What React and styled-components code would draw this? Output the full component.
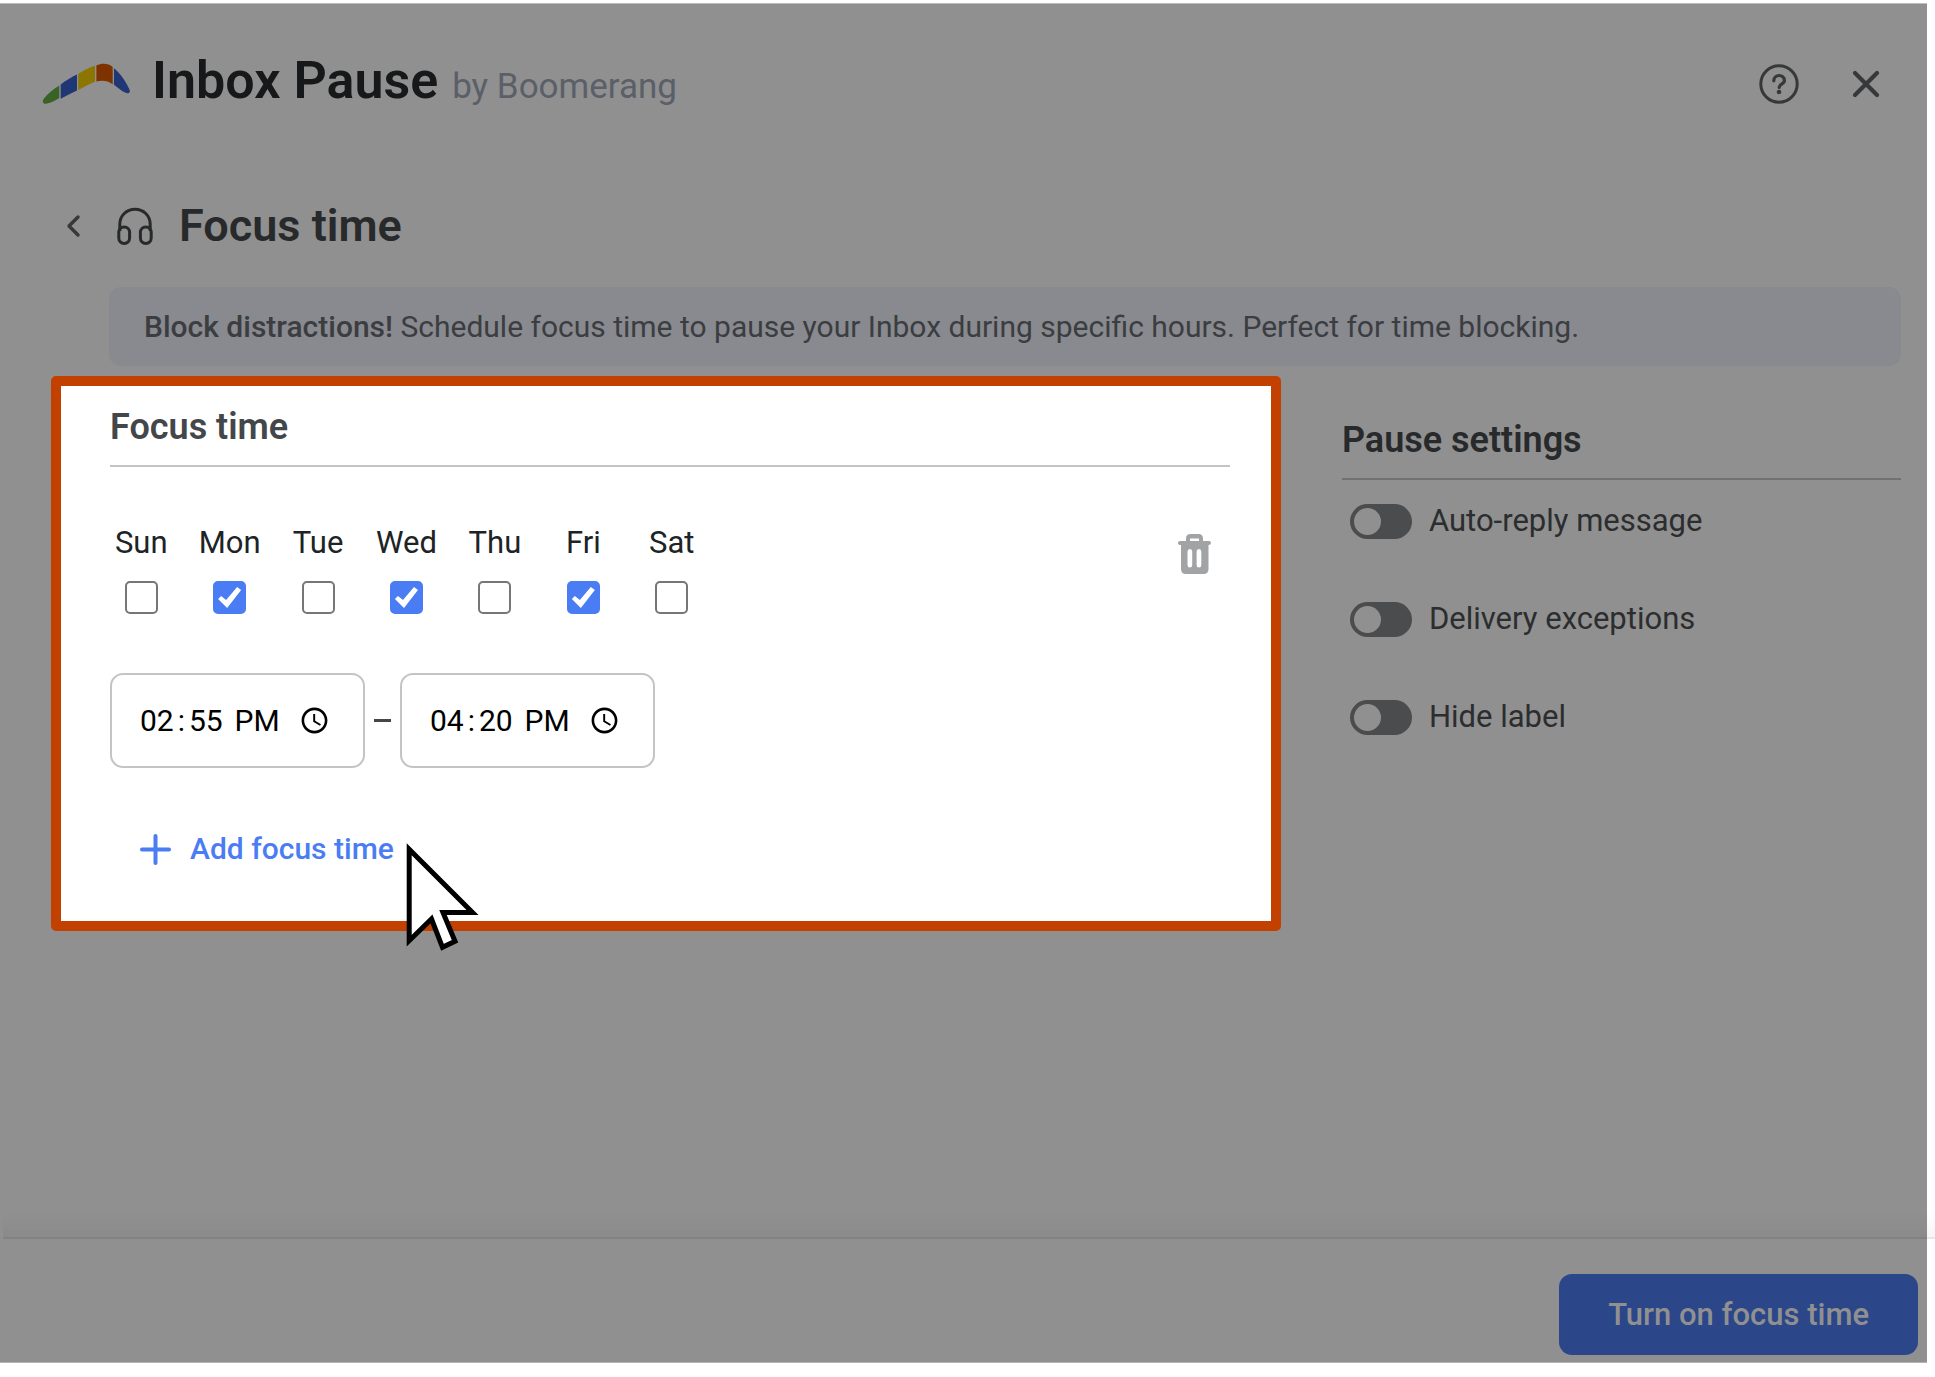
import React, { useState } from 'react';
import styled, { createGlobalStyle } from 'styled-components';

const GlobalStyle = createGlobalStyle`
  * {
    box-sizing: border-box;
  }

  body {
    margin: 0;
    background: #ffffff;
    font-family: Roboto, sans-serif;
    overflow-x: hidden;
  }

  h1, h2, h3, p {
    margin: 0;
  }

  button {
    background: none;
    border: none;
    padding: 0;
    font-family: inherit;
    cursor: pointer;
  }

  svg {
    display: block;
  }
`;

const Dialog = styled.div`
  display: flex;
  flex-direction: column;
  min-height: calc(100vh - 17px);
  margin: 3px 8px 14px 0;
  background: #909090;
  border-top: 1px solid #bcbcbc;
  border-bottom: 1px solid #b4b4b4;
`;

const Header = styled.header`
  display: flex;
  align-items: center;
  justify-content: space-between;
  height: 68px;
  margin-top: 46px;
  padding: 0 43px 0 42px;
`;

const Brand = styled.div`
  display: flex;
  align-items: center;
  gap: 21px;
`;

const Title = styled.h1`
  color: #161819;
  font-size: 52px;
  font-weight: 600;
  line-height: 60px;
`;

const Byline = styled.span`
  margin-left: 14px;
  color: #5b5f68;
  font-size: 35px;
  font-weight: 400;
`;

const HeaderActions = styled.div`
  display: flex;
  align-items: center;
  gap: 49px;
`;

const IconButton = styled.button`
  display: flex;
  color: #363839;
`;

const PageHeading = styled.div`
  display: flex;
  align-items: center;
  margin-top: 82px;
  padding-left: 64px;
`;

const PageTitle = styled.h2`
  margin-left: 26px;
  color: #27292b;
  font-size: 45px;
  font-weight: 600;
  line-height: 52px;
`;

const HeadphonesSlot = styled.span`
  margin-left: 34px;
`;

const Banner = styled.p`
  margin: 35px 26px 0 109px;
  padding: 20px 35px;
  border-radius: 12px;
  background: #888a8f;
  color: #3b3d40;
  font-size: 30px;
  line-height: 39px;

  strong {
    font-weight: 500;
  }
`;

const Columns = styled.main`
  display: grid;
  grid-template-columns: 11fr 5fr;
  align-items: start;
  gap: 61px;
  margin: 10px 26px 0 51px;
`;

const FocusPanel = styled.section`
  position: relative;
  padding: 21px 41px 54px 49px;
  border: 10px solid #c24100;
  border-radius: 5px;
  background: #ffffff;
`;

const SettingsPanel = styled.section`
  padding-top: 44px;
`;

const SectionTitle = styled.h3`
  padding-bottom: 18px;
  border-bottom: 2px solid ${(props) => (props.$dimmed ? '#717171' : '#c4c4c4')};
  color: ${(props) => (props.$dimmed ? '#27292b' : '#444749')};
  font-size: 36px;
  font-weight: 600;
  line-height: 40px;
`;

const ScheduleRow = styled.div`
  display: flex;
  justify-content: space-between;
  margin-top: 58px;
`;

const Days = styled.div`
  display: grid;
  grid-template-columns: repeat(7, 1fr);
  column-gap: 26px;
  width: 593px;
`;

const DayLabel = styled.label`
  display: flex;
  flex-direction: column;
  align-items: center;
  gap: 20px;
  color: #202325;
  font-size: 31px;
  line-height: 36px;
`;

const DayCheckbox = styled.input`
  appearance: none;
  width: 33px;
  height: 33px;
  margin: 0;
  border: 2px solid #767676;
  border-radius: 5px;
  background: #ffffff;

  &:checked {
    border-color: #4a7df3;
    background: #4a7df3;
  }

  &:checked::before {
    content: '';
    display: block;
    width: 29px;
    height: 29px;
    background: #ffffff;
    clip-path: polygon(3px 16px, 6px 13px, 11px 17px, 22px 4px, 26px 7px, 12px 25px);
  }
`;

const DeleteSlot = styled.div`
  padding: 9px 19px 0 0;
`;

const TimeRow = styled.div`
  display: flex;
  align-items: center;
  gap: 9px;
  margin-top: 59px;
`;

const TimeInput = styled.input`
  width: 255px;
  height: 95px;
  padding: 0 33px 0 27px;
  border: 2px solid #c4c4c4;
  border-radius: 13px;
  background: #ffffff;
  color: #000000;
  font-family: inherit;
  font-size: 30px;

  &::-webkit-datetime-edit-text {
    padding: 0 3px;
  }

  &::-webkit-calendar-picker-indicator {
    width: 31px;
    height: 31px;
    margin: 0;
    padding: 0;
    background-size: 31px 31px;
  }
`;

const Dash = styled.span`
  width: 17px;
  height: 3px;
  background: #444749;
`;

const AddButton = styled.button`
  display: flex;
  align-items: center;
  gap: 19px;
  margin: 63px 0 0 30px;
  color: #4a7df3;
  font-size: 30px;
  font-weight: 500;
  line-height: 36px;
`;

const Pointer = styled.svg`
  position: absolute;
  left: 345px;
  top: 454px;
  pointer-events: none;
`;

const SettingList = styled.div`
  display: flex;
  flex-direction: column;
  gap: 62px;
  margin-top: 23px;
  padding-left: 8px;
`;

const SettingLabel = styled.label`
  display: flex;
  align-items: center;
  gap: 17px;
  color: #2b2d2f;
  font-size: 31px;
  line-height: 36px;
`;

const Toggle = styled.input`
  appearance: none;
  display: flex;
  width: 62px;
  height: 35px;
  margin: 0;
  padding: 4px;
  border-radius: 18px;
  background: #4a4c4d;

  &::before {
    content: '';
    width: 27px;
    height: 27px;
    border-radius: 50%;
    background: #909090;
  }

  &:checked {
    justify-content: flex-end;
    background: #2b478a;
  }
`;

const FooterEdge = styled.div`
  height: 26px;
  margin: auto -8px 0 3px;
  border-bottom: 2px solid rgba(0, 0, 0, 0.09);
  background: linear-gradient(rgba(0, 0, 0, 0), rgba(0, 0, 0, 0.04));
`;

const Footer = styled.footer`
  display: flex;
  justify-content: flex-end;
  padding: 35px 9px 7px;
`;

const PrimaryButton = styled.button`
  height: 81px;
  padding: 0 49px;
  border-radius: 13px;
  background: #2b478a;
  color: #909090;
  font-size: 31px;
  font-weight: 500;
`;

const BoomerangLogo = () => (
  <svg width="89" height="42" viewBox="0 0 89 42" aria-hidden="true">
    <path d="M17.3 22.5 V35 C13 37.5 8 40.5 4 40.8 C0.5 41 0 38 2 35.5 C5.5 31 11 26 17.3 22.5 Z" fill="#396325" />
    <path d="M18.7 21.5 C24 17.5 29.5 14 35 11.5 V27.5 C29.5 30 24 33 18.7 35.8 Z" fill="#213775" />
    <path d="M36.3 10.8 C41.5 8 47 4.5 53 2.8 V18.8 C47.5 21 42 24 36.3 27 Z" fill="#8c7500" />
    <path d="M54.4 2.3 C60 -0.2 66.5 0.2 70.7 4 V21.2 C66 17.6 60 17 54.4 18.5 Z" fill="#7d3200" />
    <path d="M72 5.2 C79 11 84 19 87.5 26.5 C88.8 30 86.5 31 83 29.6 C79 28 76 24.5 72 21.8 Z" fill="#213775" />
  </svg>
);

const HelpIcon = () => (
  <svg width="40" height="40" viewBox="0 0 40 40" fill="none" stroke="currentColor" aria-hidden="true">
    <circle cx="20" cy="20" r="18.2" strokeWidth="3" />
    <path d="M14.8 16.8 C14.8 9.8 25.4 9.8 25.4 16.6 C25.4 20.4 20.2 20 20.2 23.4" strokeWidth="3.2" strokeLinecap="round" />
    <circle cx="20" cy="28" r="2.3" fill="currentColor" stroke="none" />
  </svg>
);

const CloseIcon = () => (
  <svg width="36" height="36" viewBox="0 0 36 36" fill="none" stroke="currentColor" aria-hidden="true">
    <path d="M7 7 L29 29 M29 7 L7 29" strokeWidth="4.2" strokeLinecap="round" />
  </svg>
);

const BackIcon = () => (
  <svg width="19" height="28" viewBox="0 0 19 28" fill="none" stroke="currentColor" aria-hidden="true">
    <path d="M14 5 L5 14 L14 23" strokeWidth="3.4" strokeLinecap="round" strokeLinejoin="round" />
  </svg>
);

const HeadphonesIcon = () => (
  <svg width="36" height="38" viewBox="0 0 36 38" fill="none" stroke="#27292b" strokeWidth="3" aria-hidden="true">
    <path d="M2.8 24 V17.5 C2.8 8.5 9.6 2.3 18 2.3 C26.4 2.3 33.2 8.5 33.2 17.5 V24" />
    <rect x="1.8" y="20" width="10.8" height="16.4" rx="5.3" />
    <rect x="23.4" y="20" width="10.8" height="16.4" rx="5.3" />
  </svg>
);

const TrashIcon = () => (
  <svg width="33" height="40" viewBox="0 0 33 40" aria-hidden="true">
    <path
      fillRule="evenodd"
      fill="#a1a3a5"
      d="M8 7 V4.5 Q8 0 12.5 0 H20.5 Q25 0 25 4.5 V7 H31 Q33 7 33 9 Q33 11 30.5 11 V35 Q30.5 40 25.5 40 H8 Q3 40 3 35 V11 Q0 11 0 9 Q0 7 2 7 Z M12 7 H21 V4.5 H12 Z M9.5 17.5 V31 Q9.5 33.5 11.9 33.5 Q14.2 33.5 14.2 31 V17.5 Q14.2 15 11.9 15 Q9.5 15 9.5 17.5 Z M18.6 17.5 V31 Q18.6 33.5 21 33.5 Q23.3 33.5 23.3 31 V17.5 Q23.3 15 21 15 Q18.6 15 18.6 17.5 Z"
    />
  </svg>
);

const PlusIcon = () => (
  <svg width="31" height="31" viewBox="0 0 31 31" fill="none" stroke="currentColor" aria-hidden="true">
    <path d="M15.5 2 V29 M2 15.5 H29" strokeWidth="4" strokeLinecap="round" />
  </svg>
);

const PointerIcon = () => (
  <Pointer width="74" height="112" viewBox="0 0 74 112" aria-hidden="true">
    <path
      d="M3.2 9.2 V100.7 L25.5 79 L36.5 107.3 L49 101.2 L37 72.5 H66.5 Z"
      fill="#ffffff"
      stroke="#000000"
      strokeWidth="5"
    />
  </Pointer>
);

const DAYS = ['Sun', 'Mon', 'Tue', 'Wed', 'Thu', 'Fri', 'Sat'];
const SETTINGS = ['Auto-reply message', 'Delivery exceptions', 'Hide label'];

const toggleItem = (list, item) =>
  list.includes(item) ? list.filter((i) => i !== item) : [...list, item];

const App = () => {
  const [selectedDays, setSelectedDays] = useState(['Mon', 'Wed', 'Fri']);
  const [enabled, setEnabled] = useState([]);
  const [start, setStart] = useState('14:55');
  const [end, setEnd] = useState('16:20');

  return (
    <>
      <GlobalStyle />
      <Dialog>
        <Header>
          <Brand>
            <BoomerangLogo />
            <Title>
              Inbox Pause<Byline>by Boomerang</Byline>
            </Title>
          </Brand>
          <HeaderActions>
            <IconButton aria-label="Help">
              <HelpIcon />
            </IconButton>
            <IconButton aria-label="Close">
              <CloseIcon />
            </IconButton>
          </HeaderActions>
        </Header>

        <PageHeading>
          <IconButton aria-label="Back">
            <BackIcon />
          </IconButton>
          <HeadphonesSlot>
            <HeadphonesIcon />
          </HeadphonesSlot>
          <PageTitle>Focus time</PageTitle>
        </PageHeading>

        <Banner>
          <strong>Block distractions!</strong> Schedule focus time to pause your Inbox during
          specific hours. Perfect for time blocking.
        </Banner>

        <Columns>
          <FocusPanel>
            <SectionTitle>Focus time</SectionTitle>
            <ScheduleRow>
              <Days>
                {DAYS.map((day) => (
                  <DayLabel key={day}>
                    {day}
                    <DayCheckbox
                      type="checkbox"
                      checked={selectedDays.includes(day)}
                      onChange={() => setSelectedDays(toggleItem(selectedDays, day))}
                    />
                  </DayLabel>
                ))}
              </Days>
              <DeleteSlot>
                <IconButton aria-label="Delete">
                  <TrashIcon />
                </IconButton>
              </DeleteSlot>
            </ScheduleRow>
            <TimeRow>
              <TimeInput
                type="time"
                aria-label="Start time"
                value={start}
                onChange={(e) => setStart(e.target.value)}
              />
              <Dash />
              <TimeInput
                type="time"
                aria-label="End time"
                value={end}
                onChange={(e) => setEnd(e.target.value)}
              />
            </TimeRow>
            <AddButton>
              <PlusIcon />
              Add focus time
            </AddButton>
            <PointerIcon />
          </FocusPanel>

          <SettingsPanel>
            <SectionTitle $dimmed>Pause settings</SectionTitle>
            <SettingList>
              {SETTINGS.map((setting) => (
                <SettingLabel key={setting}>
                  <Toggle
                    type="checkbox"
                    role="switch"
                    checked={enabled.includes(setting)}
                    onChange={() => setEnabled(toggleItem(enabled, setting))}
                  />
                  {setting}
                </SettingLabel>
              ))}
            </SettingList>
          </SettingsPanel>
        </Columns>

        <FooterEdge />
        <Footer>
          <PrimaryButton>Turn on focus time</PrimaryButton>
        </Footer>
      </Dialog>
    </>
  );
};

export default App;
